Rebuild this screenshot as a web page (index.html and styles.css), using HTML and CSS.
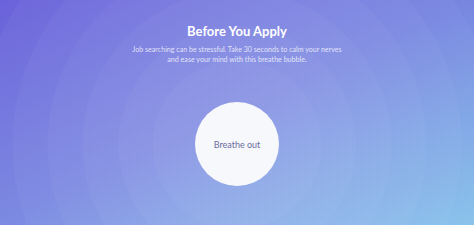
FILE: index.html
```html
<!DOCTYPE html>
<html lang="en">

<head>
    <meta charset="UTF-8">
    <meta name="viewport" content="width=device-width, initial-scale=1.0">
    <title>Before You Apply</title>
    <link rel="stylesheet" href="styles.css">
</head>

<body>
    <div class="page">
        <h1 class="title">Before You Apply</h1>
        <p class="intro">Job searching can be stressful. Take 30 seconds to calm your nerves<br>and ease your mind with this breathe bubble.</p>
        <div class="bubble">
            <span class="bubble-text">Breathe out</span>
        </div>
    </div>
</body>

</html>
```

FILE: styles.css
```css
html,
body {
    margin: 0;
    height: 100%;
}

body {
    font-family: Lato, "Noto Sans", sans-serif;
    overflow: hidden;
    background:
        radial-gradient(circle at 237px 145px, rgba(255, 255, 255, 0.03) 84px, transparent 85px),
        radial-gradient(circle at 237px 145px, rgba(255, 255, 255, 0.03) 118px, transparent 119px),
        radial-gradient(circle at 237px 145px, rgba(255, 255, 255, 0.03) 154px, transparent 155px),
        radial-gradient(circle at 237px 145px, rgba(255, 255, 255, 0.03) 189px, transparent 190px),
        radial-gradient(circle at 237px 145px, rgba(255, 255, 255, 0.03) 224px, transparent 225px),
        radial-gradient(circle at 237px 145px, rgba(255, 255, 255, 0.03) 260px, transparent 261px),
        linear-gradient(to bottom right, #6a62da 0%, #7886e0 50%, #86c2ea 100%);
}

.page {
    display: flex;
    flex-direction: column;
    align-items: center;
    padding-top: 23px;
}

.title {
    margin: 0;
    color: #fff;
    font-size: 13px;
    font-weight: 700;
    line-height: 16px;
}

.intro {
    margin: 6px 0 0;
    color: rgba(255, 255, 255, 0.78);
    font-size: 7.1px;
    line-height: 10px;
    text-align: center;
}

.bubble {
    margin-top: 37px;
    width: 84px;
    height: 84px;
    border-radius: 50%;
    background: #f7f8fc;
    display: flex;
    justify-content: center;
    align-items: center;
}

.bubble-text {
    color: #6b6c9e;
    font-size: 9px;
}
```
